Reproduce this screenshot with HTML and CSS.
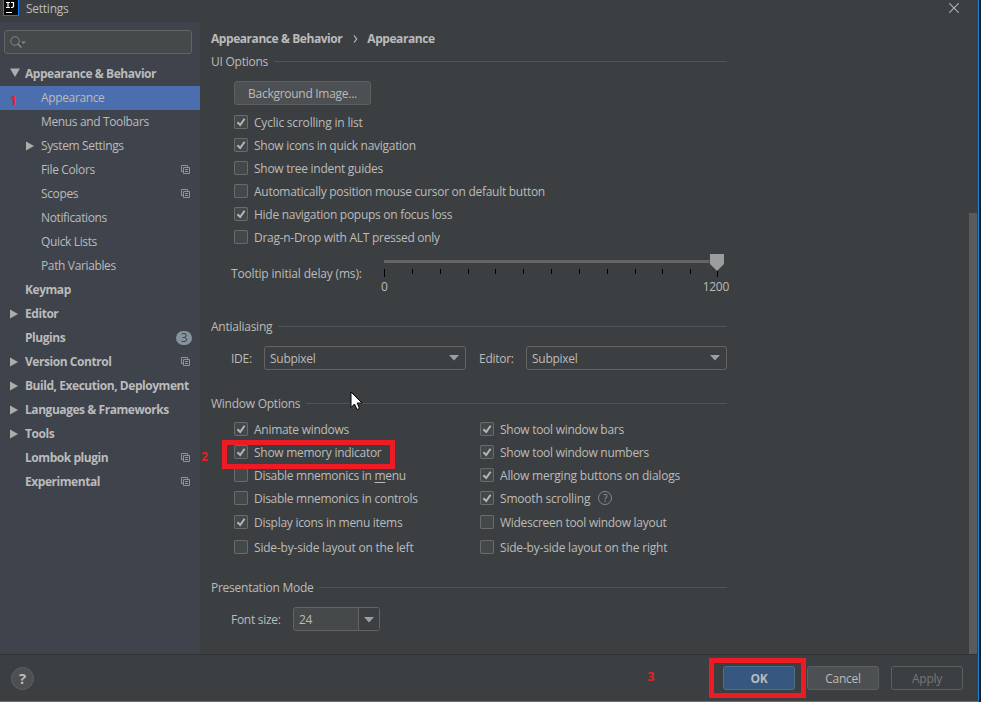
FILE: index.html
```html
<!DOCTYPE html>
<html lang="en">
<head>
<meta charset="utf-8">
<title>Settings</title>
<link rel="stylesheet" href="styles.css">
</head>
<body>
<svg class="defs" width="0" height="0">
  <symbol id="copy" viewBox="0 0 9 9"><path d="M2 6.5H.5V.5H6.5V2M2.5 2.5H8.5V8.5H2.5ZM4 4.5H7M4 6.5H7" fill="none" stroke="#8b949c"/></symbol>
  <symbol id="check" viewBox="0 0 14 14"><path d="M3.4 7.2L6.2 10L10.6 3.7" fill="none" stroke="#b4b7b9" stroke-width="2"/></symbol>
  <symbol id="right" viewBox="0 0 8 10"><path d="M0 .5L8 5L0 9.5Z" fill="#adadad"/></symbol>
  <symbol id="down" viewBox="0 0 10 6"><path d="M0 0H10L5 5.5Z" fill="#9da0a2"/></symbol>
</svg>
<div class="window">
  <header class="titlebar">
    <svg class="logo" width="16" height="16" viewBox="0 0 16 16"><rect width="16" height="16" fill="#087cfa"/><rect x="1" y="0" width="14" height="15" fill="#070707"/><path d="M3 2.500H7M5 2.500V7.500M3 7.500H7M8 2.500H11M10.500 2V6.500L9.500 7.500H8M3 12.500H9" fill="none" stroke="#fff" stroke-width="1.2"/></svg>
    <span class="title">Settings</span>
    <svg class="close" width="10" height="10" viewBox="0 0 10 10"><path d="M.3.3L9.700 9.700M9.700.3L.3 9.700" stroke="#b0b3b5" stroke-width="1.1"/></svg>
  </header>
  <div class="content">
    <nav class="sidebar">
      <div class="search"><svg width="17" height="13" viewBox="0 0 17 13"><circle cx="5" cy="5" r="4.300" fill="none" stroke="#82878a"/><path d="M8 8L11.500 11.800" stroke="#82878a" stroke-width="1.400"/><path d="M11 5.500H16L13.500 8Z" fill="#82878a"/></svg></div>
      <ul class="tree">
        <li class="top"><svg class="arrow open" width="10" height="9" viewBox="0 0 10 9"><path d="M0 .5H10L5 9Z" fill="#adadad"/></svg><span>Appearance &amp; Behavior</span></li>
        <li class="sub selected"><span>Appearance</span><b class="note one">1</b></li>
        <li class="sub"><span>Menus and Toolbars</span></li>
        <li class="sub"><svg class="arrow"><use href="#right"/></svg><span>System Settings</span></li>
        <li class="sub"><span>File Colors</span><svg class="copy"><use href="#copy"/></svg></li>
        <li class="sub"><span>Scopes</span><svg class="copy"><use href="#copy"/></svg></li>
        <li class="sub"><span>Notifications</span></li>
        <li class="sub"><span>Quick Lists</span></li>
        <li class="sub"><span>Path Variables</span></li>
        <li class="top"><span>Keymap</span></li>
        <li class="top"><svg class="arrow"><use href="#right"/></svg><span>Editor</span></li>
        <li class="top"><span>Plugins</span><i class="count">3</i></li>
        <li class="top"><svg class="arrow"><use href="#right"/></svg><span>Version Control</span><svg class="copy"><use href="#copy"/></svg></li>
        <li class="top"><svg class="arrow"><use href="#right"/></svg><span>Build, Execution, Deployment</span></li>
        <li class="top"><svg class="arrow"><use href="#right"/></svg><span>Languages &amp; Frameworks</span></li>
        <li class="top"><svg class="arrow"><use href="#right"/></svg><span>Tools</span></li>
        <li class="top"><span>Lombok plugin</span><svg class="copy"><use href="#copy"/></svg></li>
        <li class="top"><span>Experimental</span><svg class="copy"><use href="#copy"/></svg></li>
      </ul>
    </nav>
    <main class="panel">
      <div class="crumbs"><span>Appearance &amp; Behavior</span><svg width="5" height="8" viewBox="0 0 5 8"><path d="M1 .5L3.700 4L1 7.500" fill="none" stroke="#bbb" stroke-width="1.200"/></svg><span>Appearance</span></div>
      <h2>UI Options</h2>
      <button class="btn background">Background Image...</button>
      <div class="checks">
        <div class="check"><svg class="box"><use href="#check"/></svg><span class="loose">Cyclic scrolling in list</span></div>
        <div class="check"><svg class="box"><use href="#check"/></svg><span>Show icons in quick navigation</span></div>
        <div class="check"><svg class="box"></svg><span>Show tree indent guides</span></div>
        <div class="check"><svg class="box"></svg><span>Automatically position mouse cursor on default button</span></div>
        <div class="check"><svg class="box"><use href="#check"/></svg><span>Hide navigation popups on focus loss</span></div>
        <div class="check"><svg class="box"></svg><span>Drag-n-Drop with ALT pressed only</span></div>
      </div>
      <div class="delay">
        <span class="delay-label">Tooltip initial delay (ms):</span>
        <div class="slider">
          <svg width="346" height="24" viewBox="0 0 346 24"><path d="M4 6.500H337" stroke="#656565" stroke-width="3"/><path d="M4.500 14V22M337.500 14V22M32.500 14V19M60.500 14V19M88.500 14V19M115.500 14V19M143.500 14V19M171.500 14V19M199.500 14V19M227.500 14V19M255.500 14V19M282.500 14V19M310.500 14V19" stroke="#000"/><path d="M329.500 -1H344.500V9.500L338.500 16H335.500L329.500 9.500Z" fill="#3c3f41"/><path d="M330 -1H344V9L337.500 15.500H336.500L330 9Z" fill="#9b9e9f"/></svg>
          <div class="scale"><span>0</span><span>1200</span></div>
        </div>
      </div>
      <h2>Antialiasing</h2>
      <div class="selects">
        <label>IDE:</label><div class="select"><span>Subpixel</span><svg><use href="#down"/></svg></div>
        <label class="second">Editor:</label><div class="select"><span>Subpixel</span><svg><use href="#down"/></svg></div>
      </div>
      <h2>Window Options</h2>
      <div class="checks pair">
        <div class="check"><svg class="box"><use href="#check"/></svg><span>Animate windows</span></div>
        <div class="check"><svg class="box"><use href="#check"/></svg><span>Show tool window bars</span></div>
        <div class="check marked"><svg class="box"><use href="#check"/></svg><span>Show memory indicator</span><b class="note two">2</b></div>
        <div class="check"><svg class="box"><use href="#check"/></svg><span>Show tool window numbers</span></div>
        <div class="check"><svg class="box"></svg><span>Disable mnemonics in <u>m</u>enu</span></div>
        <div class="check"><svg class="box"><use href="#check"/></svg><span class="loose">Allow merging buttons on dialogs</span></div>
        <div class="check"><svg class="box"></svg><span>Disable mnemonics in controls</span></div>
        <div class="check"><svg class="box"><use href="#check"/></svg><span class="loose">Smooth scrolling</span><i class="hint">?</i></div>
        <div class="check"><svg class="box"><use href="#check"/></svg><span>Display icons in menu items</span></div>
        <div class="check"><svg class="box"></svg><span>Widescreen tool window layout</span></div>
        <div class="check"><svg class="box"></svg><span class="loose">Side-by-side layout on the left</span></div>
        <div class="check"><svg class="box"></svg><span class="loose">Side-by-side layout on the right</span></div>
      </div>
      <h2>Presentation Mode</h2>
      <div class="font-size"><span>Font size:</span><div class="combo"><span>24</span><i><svg><use href="#down"/></svg></i></div></div>
      <svg class="cursor" width="13" height="20" viewBox="0 0 13 20"><path d="M1 1V16.500L4.500 13L7 18.500L9.500 17.500L7.200 12H12Z" fill="#fff" stroke="#000"/></svg>
    </main>
    <div class="scroll"><div class="thumb"></div></div>
  </div>
  <footer class="footer">
    <button class="help">?</button>
    <b class="three">3</b>
    <div class="ok-wrap"><button class="btn ok">OK</button></div>
    <button class="btn">Cancel</button>
    <button class="btn disabled">Apply</button>
  </footer>
</div>
</body>
</html>
```
FILE: styles.css
```css
*, *::before, *::after { box-sizing: border-box; }
body { margin: 0; background: #1d1f24; color: #bbb; font: 12px/16px "Open Sans", "Noto Sans", sans-serif; letter-spacing: -0.28px; overflow: hidden; }
svg { display: block; flex: none; }
.defs { position: absolute; }
.window { width: 979px; height: 702px; background: #3c3f41; border-right: 1px solid #1883d7; border-bottom: 1px solid #1883d7; display: flex; flex-direction: column; }
.titlebar { height: 22px; display: flex; align-items: flex-start; padding: 0 19px 0 3px; flex: none; }
.title { margin: 1px auto 0 7px; letter-spacing: -0.25px; }
.close { margin-top: 3px; }
.content { height: 632px; display: flex; flex: none; }
.sidebar { width: 200px; background: #3f434c; padding-top: 8px; }
.search { margin: 0 8px 8px 4px; height: 24px; border: 1px solid #646464; border-radius: 3px; background: #45494a; padding: 5px; }
.tree { list-style: none; margin: 0; padding: 0; }
.tree li { height: 24px; display: flex; align-items: center; position: relative; white-space: nowrap; padding-right: 10px; }
.tree .top { padding-left: 25px; font-weight: 700; letter-spacing: -0.45px; }
.tree .sub { padding-left: 41px; letter-spacing: -0.36px; }
.tree .selected { background: #4b6eaf; }
.arrow { position: absolute; width: 8px; height: 10px; left: 10px; top: 7px; }
.sub .arrow { left: 26px; }
.arrow.open { width: 10px; height: 9px; left: 10px; top: 6px; }
.copy { width: 9px; height: 9px; margin: 0 0 1px auto; }
.count { margin: 0 -2px 1px auto; width: 16px; height: 14px; border-radius: 8px; background: #87939a; color: #3f434c; font: 12px/14px "Open Sans", sans-serif; text-align: center; }
.note, .three { color: #ed1c24; font: 700 12px/14px "Open Sans", sans-serif; }
.note { position: absolute; }
.one { left: 10px; top: 8px; }
.panel { width: 769px; padding: 8px 0 0 11px; position: relative; }
.crumbs { display: flex; align-items: center; height: 18px; font-weight: 700; letter-spacing: -0.44px; }
.crumbs svg { margin: 0 9px 0 11px; }
h2 { margin: 0; width: 516px; height: 16px; font: inherit; display: flex; align-items: center; gap: 6px; letter-spacing: -0.25px; }
.crumbs + h2 { margin-top: 6px; }
h2::after { content: ""; height: 1px; flex: 1; background: #515456; margin-bottom: 2px; }
.btn { width: 72px; height: 24px; padding: 2px 0 0; border: 1px solid #5e6060; border-radius: 3px; background: #4c5052; color: #bbb; font: inherit; letter-spacing: inherit; }
.background { display: block; width: 137px; margin: 11px 0 6px 23px; }
.checks { margin-left: 23px; }
.check { height: 23px; padding-top: 4px; display: flex; align-items: flex-start; gap: 6px; white-space: nowrap; position: relative; }
.loose { letter-spacing: -0.2px; }
.box { width: 14px; height: 14px; border-radius: 2px; background: #43494a; box-shadow: inset 0 0 0 1px #6b6b6b; }
.delay { display: flex; margin: 6px 0 0 20px; height: 64px; }
.delay-label { width: 149px; padding-top: 11px; letter-spacing: -0.17px; }
.slider svg { overflow: visible; }
.scale { display: flex; justify-content: space-between; width: 349px; padding-left: 1px; }
.selects { display: flex; align-items: center; height: 24px; margin: 11px 0 26px 20px; }
.selects label, .select span { padding-top: 1px; }
.selects label { width: 33px; }
.selects .second { width: 47px; margin-left: 13px; }
.select { width: 202px; height: 24px; border: 1px solid #646464; border-radius: 3px; display: flex; align-items: center; justify-content: space-between; padding: 0 6px 0 5px; }
.second + .select { width: 201px; }
.select svg, .combo svg { width: 10px; height: 6px; }
.pair { display: grid; grid-template-columns: 246px 246px; grid-template-rows: 23px 23px 23px 24px 25px 23px; margin-top: 6px; margin-bottom: 21px; }
.pair .check { height: auto; }
.marked::after { content: ""; position: absolute; left: -12px; top: -1px; width: 173px; height: 29px; border: 5px solid #ed1c24; z-index: 1; }
.two { left: -33px; top: 9px; }
u { text-underline-offset: 2px; }
.hint { width: 14px; height: 14px; border: 1px solid #85898b; border-radius: 50%; font: 10px/12px "Open Sans", sans-serif; text-align: center; color: #969a9c; margin-left: 2px; }
.font-size { display: flex; align-items: center; margin: 11px 0 0 20px; }
.font-size > span { width: 62px; padding-top: 1px; }
.combo { width: 87px; height: 24px; border: 1px solid #646464; border-radius: 3px; background: #45494a; display: flex; }
.combo span { width: 64px; padding: 4px 5px; }
.combo i { flex: 1; border-left: 1px solid #646464; background: #3c3f41; padding: 9px 0 0 5px; }
.cursor { position: absolute; left: 150px; top: 369px; }
.scroll { width: 9px; padding-top: 191px; }
.thumb { width: 8px; height: 441px; background: #595b5d; }
.footer { height: 47px; border-top: 1px solid #323232; display: flex; align-items: center; padding: 0 15px 0 11px; flex: none; }
.help { width: 23px; height: 23px; padding: 0; border: 1px solid #5e6060; border-radius: 50%; background: #4c5052; color: #bbb; font: 700 15px/20px "Open Sans", sans-serif; margin-right: auto; }
.three { margin-right: 55px; margin-top: -2px; }
.ok-wrap { border: 5px solid #ed1c24; width: 97px; height: 40px; padding: 3px 6px 3px 9px; margin-right: 1px; }
.ok { background: #365880; border-color: #4c708c; font-weight: 700; }
.disabled { margin-left: 12px; background: none; color: #777; }
```
